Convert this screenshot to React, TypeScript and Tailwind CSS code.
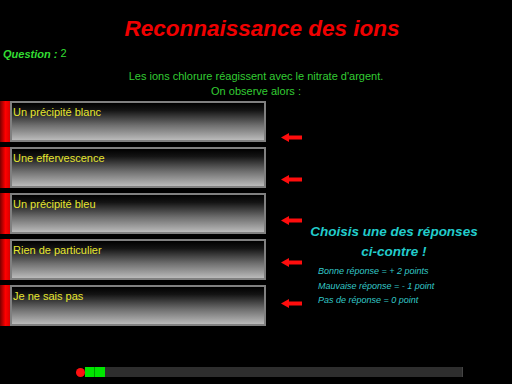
import React from "react";

const answers = [
  "Un précipité blanc",
  "Une effervescence",
  "Un précipité bleu",
  "Rien de particulier",
  "Je ne sais pas",
];

function Arrow() {
  return (
    <svg width="21" height="9" viewBox="0 0 21 9" className="block">
      <polygon points="0,4.5 8,0 8,2.5 21,2.5 21,6.5 8,6.5 8,9" fill="#ff0d0d" />
    </svg>
  );
}

export default function App() {
  return (
    <div className="w-[512px] h-[384px] bg-black overflow-hidden flex flex-col font-['Liberation_Sans',Arial,sans-serif]">
      <div className="pt-[17px] h-[40px] pl-[12px] text-center">
        <div className="text-[22.5px] leading-[23px] font-bold italic text-[#f00000]">
          Reconnaissance des ions
        </div>
      </div>
      <div className="mt-[8px] pl-[3px] flex items-start h-[13px]">
        <span className="text-[11px] leading-[13px] font-bold italic text-[#33dd33]">Question :</span>
        <span className="ml-[3px] -mt-[1px] text-[11px] leading-[13px] text-[#33dd33]">2</span>
      </div>
      <div className="mt-[7.5px] text-center text-[11px] leading-[15px] text-[#33cc33]">
        <div>Les ions chlorure réagissent avec le nitrate d'argent.</div>
        <div>On observe alors :</div>
      </div>
      <div className="mt-[2.5px] flex">
        <div className="w-[266px] flex flex-col gap-[5px]">
          {answers.map((a) => (
            <div key={a} className="flex h-[41px]">
              <div className="w-[10px] h-full bg-[linear-gradient(to_right,#7a0000,#ff0000_55%,#d80000)]" />
              <div className="flex-1 h-full border-2 border-[#808080] bg-[linear-gradient(to_bottom,#000000_0%,#141414_20%,#6e6e6e_60%,#bababa_100%)] pl-[1px] pt-[3px]">
                <div className="text-[11px] leading-[13px] text-[#e6e630]">{a}</div>
              </div>
            </div>
          ))}
        </div>
        <div className="ml-[15px] pt-[32px] flex flex-col gap-[32.5px]">
          {answers.map((a) => (
            <Arrow key={a} />
          ))}
        </div>
        <div className="w-[184px] pt-[121px] flex flex-col">
          <div className="text-center text-[13.5px] leading-[20px] font-bold italic text-[#22cccc]">
            <div>Choisis une des réponses</div>
            <div>ci-contre !</div>
          </div>
          <div className="mt-[2px] pl-[16px] text-[9px] leading-[14.5px] italic text-[#33c8c8]">
            <div>Bonne réponse = + 2 points</div>
            <div>Mauvaise réponse = - 1 point</div>
            <div>Pas de réponse = 0 point</div>
          </div>
        </div>
      </div>
      <div className="mt-[41px] flex items-center pl-[76px]">
        <div className="w-[9px] h-[9px] rounded-full bg-[#ff1010]" />
        <div className="w-[10px] h-[10px] bg-[#00e600] border-r border-[#009900]" />
        <div className="w-[10px] h-[10px] bg-[#00e600]" />
        <div className="w-[358px] h-[10px] bg-[#2e2e2e] border-r border-[#444]" />
      </div>
    </div>
  );
}
